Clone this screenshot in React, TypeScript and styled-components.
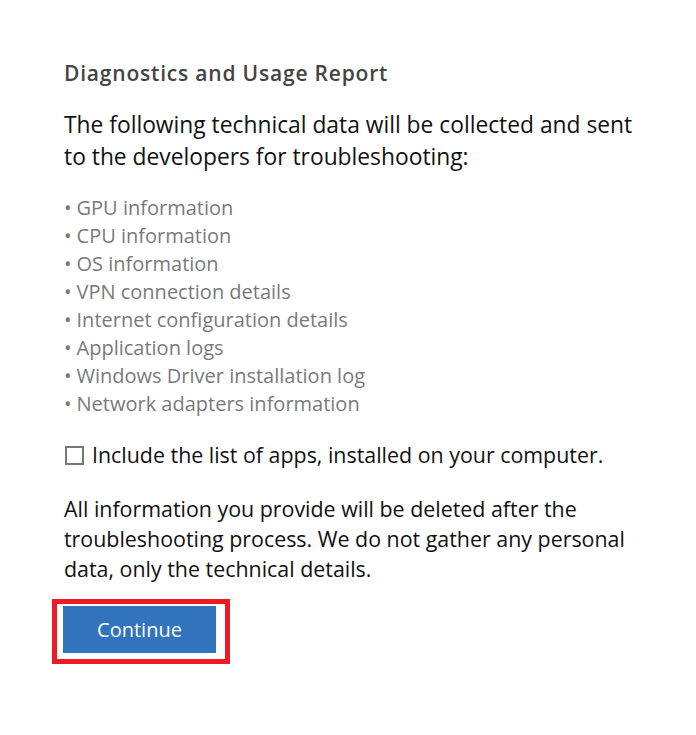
import React from "react";
import styled, { createGlobalStyle } from "styled-components";

const Global = createGlobalStyle`
  html, body { margin: 0; padding: 0; background: #ffffff; }
  body { font-family: "Segoe UI", "Open Sans", sans-serif; }
`;

const Page = styled.div`
  width: 696px;
  min-height: 735px;
  box-sizing: border-box;
  padding: 58px 20px 0 64px;
  display: flex;
  flex-direction: column;
  align-items: flex-start;
`;

const Title = styled.h1`
  margin: 0;
  font-size: 21px;
  line-height: 30px;
  font-weight: 600;
  letter-spacing: 0.8px;
  color: #444444;
`;

const Lead = styled.p`
  margin: 21px 0 0;
  font-size: 22.8px;
  line-height: 32px;
  color: #111111;
  white-space: nowrap;
`;

const List = styled.ul`
  list-style: none;
  margin: 21px 0 0;
  padding: 0;
  display: flex;
  flex-direction: column;
`;

const Item = styled.li`
  font-size: 20px;
  line-height: 28px;
  color: #7a7a7a;
  &::before {
    content: "•";
    margin-right: 5px;
  }
`;

const CheckRow = styled.label`
  margin-top: 22px;
  display: flex;
  align-items: center;
  gap: 8px;
  font-size: 21.4px;
  line-height: 30px;
  color: #111111;
  white-space: nowrap;
`;

const Box = styled.span`
  width: 19px;
  height: 19px;
  flex: none;
  box-sizing: border-box;
  border: 2px solid #777777;
  background: #fff;
  margin-left: 1px;
`;

const Note = styled.p`
  margin: 24px 0 0;
  font-size: 21.4px;
  line-height: 30px;
  color: #111111;
  white-space: nowrap;
`;

const Focus = styled.div`
  margin: 15px 0 0 -12px;
  border: 5px solid #ed1c24;
  padding: 2px 9px 6px 6px;
`;

const Button = styled.button`
  width: 153px;
  height: 47px;
  border: none;
  background: #3173bd;
  color: #ffffff;
  font-family: inherit;
  font-size: 20px;
  padding: 0;
  cursor: pointer;
`;

const items = [
  "GPU information",
  "CPU information",
  "OS information",
  "VPN connection details",
  "Internet configuration details",
  "Application logs",
  "Windows Driver installation log",
  "Network adapters information",
];

export default function App() {
  return (
    <>
      <Global />
      <Page>
        <Title>Diagnostics and Usage Report</Title>
        <Lead>
          The following technical data will be collected and sent
          <br />
          to the developers for troubleshooting:
        </Lead>
        <List>
          {items.map((t) => (
            <Item key={t}>{t}</Item>
          ))}
        </List>
        <CheckRow>
          <Box />
          Include the list of apps, installed on your computer.
        </CheckRow>
        <Note>
          All information you provide will be deleted after the
          <br />
          troubleshooting process. We do not gather any personal
          <br />
          data, only the technical details.
        </Note>
        <Focus>
          <Button>Continue</Button>
        </Focus>
      </Page>
    </>
  );
}
